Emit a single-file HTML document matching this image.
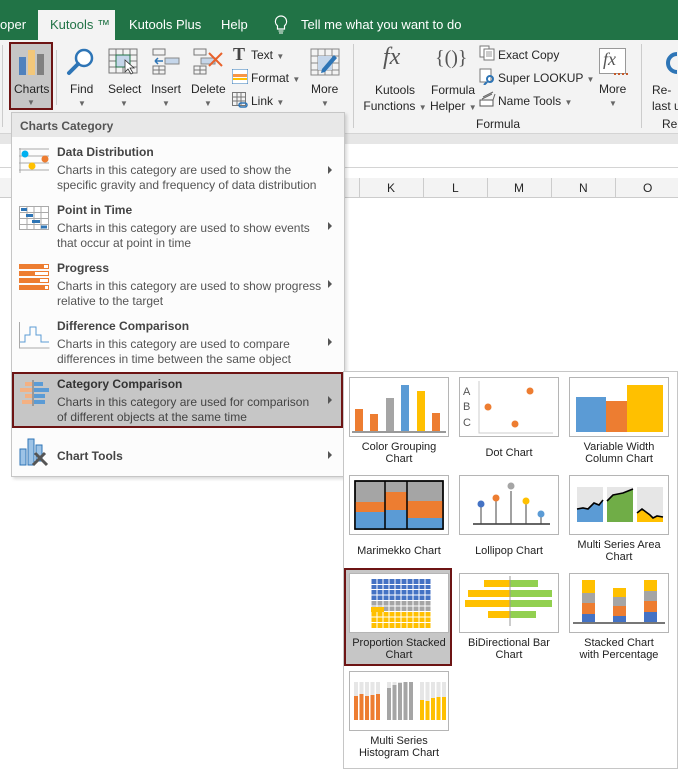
<!DOCTYPE html>
<html><head><meta charset="utf-8"><style>
*{margin:0;padding:0;box-sizing:border-box}
body{width:678px;height:769px;overflow:hidden;background:#fff;font-family:"Liberation Sans",sans-serif;position:relative;font-size:12px;color:#262626}
.a{position:absolute}
.t{position:absolute;white-space:nowrap}
.c{text-align:center}
.tab{color:#fff;font-size:13px;top:17px}
.rl{font-size:12px;color:#262626}
.dd{font-size:8px;color:#666}
.mt{font-weight:bold;color:#444;font-size:12px}
.md{color:#555;font-size:12px;line-height:15px}
.arr{position:absolute;right:10px;width:0;height:0;border-left:4px solid #555;border-top:4px solid transparent;border-bottom:4px solid transparent}
.tile{position:absolute;width:100px;height:60px;border:1px solid #b5b5b5;background:#fff}
.lab{position:absolute;width:110px;text-align:center;font-size:11px;line-height:12px;color:#222}
</style></head><body>
<!-- green bar -->
<div class="a" style="left:0;top:0;width:678px;height:40px;background:#217346"></div>
<div class="a" style="left:38px;top:10px;width:77px;height:31px;background:#f3f3f3"></div>
<div class="t tab" style="left:0">oper</div>
<div class="t tab" style="left:50px;color:#217346">Kutools ™</div>
<div class="t tab" style="left:129px">Kutools Plus</div>
<div class="t tab" style="left:221px">Help</div>
<svg class="a" style="left:274px;top:15px" width="14" height="20"><path d="M7 1a5.5 5.5 0 0 0-3.5 9.8V14h7v-3.2A5.5 5.5 0 0 0 7 1z" fill="none" stroke="#fff" stroke-width="1.2"/><path d="M4.5 16h5M5 18h4" stroke="#fff"/></svg>
<div class="t tab" style="left:301px">Tell me what you want to do</div>
<!-- ribbon -->
<div class="a" style="left:0;top:40px;width:678px;height:93px;background:#f3f3f3"></div>
<div class="a" style="left:2px;top:45px;width:1px;height:82px;background:#ccc"></div>
<div class="a" style="left:56px;top:50px;width:1px;height:55px;background:#ccc"></div>
<div class="a" style="left:353px;top:44px;width:1px;height:84px;background:#ccc"></div>
<div class="a" style="left:641px;top:44px;width:1px;height:84px;background:#ccc"></div>
<!-- Charts btn -->
<div class="a" style="left:9px;top:42px;width:44px;height:68px;background:#c6c6c6;border:2px solid #6d1414"></div>
<svg class="a" style="left:18px;top:48px" width="28" height="28"><rect x="1" y="9" width="7" height="18" fill="#4f81bd"/><rect x="10" y="2" width="7" height="25" fill="#f2c77a"/><rect x="19" y="6" width="7" height="21" fill="#808080"/></svg>
<div class="t rl" style="left:14px;top:82px">Charts</div>
<div class="t dd" style="left:27px;top:98px">▼</div>
<!-- Find -->
<svg class="a" style="left:66px;top:47px" width="30" height="30"><circle cx="18" cy="11" r="8" fill="#fff" stroke="#2e75b6" stroke-width="2.5"/><path d="M12 17L3 26" stroke="#2e75b6" stroke-width="4" stroke-linecap="round"/></svg>
<div class="t rl" style="left:70px;top:82px">Find</div><div class="t dd" style="left:78px;top:99px">▼</div>
<svg class="a" style="left:108px;top:48px" width="32" height="28"><g stroke="#777" fill="none"><rect x="1" y="1" width="28" height="24"/><path d="M1 7h28M1 13h28M1 19h28M8 1v24M15 1v24M22 1v24"/></g><rect x="8" y="7" width="14" height="12" fill="#c5d6ea" stroke="#217346"/><path d="M17 12l0 12 3-3 3 5 2-1-3-5 4 0z" fill="#fff" stroke="#333" stroke-width=".8"/></svg>
<div class="t rl" style="left:108px;top:82px">Select</div><div class="t dd" style="left:120px;top:99px">▼</div>
<svg class="a" style="left:152px;top:48px" width="30" height="28"><g stroke="#777" fill="none"><rect x="1" y="1" width="12" height="6"/><rect x="1" y="18" width="12" height="8"/><path d="M7 18v8M1 22h12M1 1h6"/><rect x="13" y="10" width="14" height="6" fill="#c5d6ea" stroke="#888"/></g><path d="M3 13h8M3 13l3-3M3 13l3 3" stroke="#2e75b6" stroke-width="1.5" fill="none"/></svg>
<div class="t rl" style="left:151px;top:82px">Insert</div><div class="t dd" style="left:162px;top:99px">▼</div>
<svg class="a" style="left:193px;top:48px" width="32" height="28"><g stroke="#777" fill="none"><rect x="1" y="1" width="12" height="6"/><rect x="1" y="18" width="12" height="8"/><path d="M7 18v8M1 22h12"/><rect x="8" y="10" width="14" height="6" fill="#c5d6ea" stroke="#888"/></g><path d="M16 5l13 13M29 5L16 18" stroke="#e8622c" stroke-width="2"/></svg>
<div class="t rl" style="left:191px;top:82px">Delete</div><div class="t dd" style="left:204px;top:99px">▼</div>
<div class="t" style="left:233px;top:44px;font-family:'Liberation Serif',serif;font-size:18px;font-weight:bold;color:#444">T</div>
<div class="t rl" style="left:251px;top:48px">Text <span class="dd">▼</span></div>
<svg class="a" style="left:232px;top:69px" width="16" height="15"><rect x="0" y="0" width="16" height="15" fill="#fff" stroke="#2e75b6"/><rect x="1" y="5" width="14" height="3" fill="#f79646"/><rect x="1" y="9" width="14" height="2" fill="#ffc000"/></svg>
<div class="t rl" style="left:251px;top:71px">Format <span class="dd">▼</span></div>
<svg class="a" style="left:232px;top:92px" width="16" height="16"><g stroke="#777" fill="none"><rect x=".5" y=".5" width="13" height="13"/><path d="M5 .5v13M9 .5v13M.5 5h13M.5 9h13"/></g><rect x="7" y="11" width="8" height="4" rx="2" fill="none" stroke="#2e75b6" stroke-width="1.5"/></svg>
<div class="t rl" style="left:251px;top:94px">Link <span class="dd">▼</span></div>
<svg class="a" style="left:310px;top:48px" width="30" height="28"><g stroke="#888" fill="none"><rect x="1" y="1" width="28" height="26"/><path d="M1 8h28M1 15h28M1 22h28M8 1v26M15 1v26M22 1v26"/></g><rect x="8" y="8" width="14" height="14" fill="#c5d6ea"/><path d="M12 21l12-14 3 3-12 14-4 1z" fill="#2e75b6"/></svg>
<div class="t rl" style="left:311px;top:82px">More</div><div class="t dd" style="left:321px;top:99px">▼</div>
<!-- formula group -->
<div class="t" style="left:383px;top:44px;font-family:'Liberation Serif',serif;font-style:italic;font-size:24px;color:#555">fx</div>
<div class="t rl c" style="left:362px;top:82px;width:66px;line-height:16px">Kutools<br>Functions <span class="dd">▼</span></div>
<div class="t" style="left:435px;top:47px;font-family:'Liberation Serif',serif;font-size:20px;color:#555">{()}</div>
<div class="t rl" style="left:430px;top:82px;line-height:16px;text-align:center;width:46px">Formula<br>Helper <span class="dd">▼</span></div>
<svg class="a" style="left:479px;top:45px" width="16" height="16"><rect x="1" y="1" width="9" height="11" fill="#fff" stroke="#777"/><rect x="5" y="4" width="10" height="11" fill="#fff" stroke="#777"/><path d="M7 7h6M7 9h6M7 11h6" stroke="#999"/></svg>
<div class="t rl" style="left:498px;top:48px">Exact Copy</div>
<svg class="a" style="left:479px;top:68px" width="17" height="17"><rect x="1" y="1" width="11" height="13" fill="#fff" stroke="#777"/><circle cx="11" cy="11" r="3" fill="none" stroke="#2e75b6" stroke-width="2"/><path d="M8 14l-3 3" stroke="#2e75b6" stroke-width="2"/></svg>
<div class="t rl" style="left:498px;top:71px">Super LOOKUP <span class="dd">▼</span></div>
<svg class="a" style="left:479px;top:91px" width="17" height="16"><rect x="1" y="9" width="13" height="6" fill="#fff" stroke="#555"/><path d="M3 8l10-5M4 6l10-5M14 9l2-6" stroke="#666" fill="none"/></svg>
<div class="t rl" style="left:498px;top:94px">Name Tools <span class="dd">▼</span></div>
<div class="a" style="left:599px;top:48px;width:27px;height:26px;border:1px solid #999;background:#fff"></div>
<div class="t" style="left:603px;top:49px;font-family:'Liberation Serif',serif;font-style:italic;font-size:18px;color:#555">fx</div>
<div class="a" style="left:614px;top:73px;width:14px;height:2px;border-top:2px dotted #c55a2a"></div>
<div class="t rl" style="left:599px;top:82px">More</div><div class="t dd" style="left:609px;top:99px">▼</div>
<div class="t rl" style="left:476px;top:117px">Formula</div>
<svg class="a" style="left:664px;top:50px" width="20" height="26"><path d="M13 4a9 9 0 1 0 0 18" stroke="#2e75b6" stroke-width="4" fill="none"/></svg>
<div class="t rl" style="left:652px;top:82px;line-height:16px">Re-<br>last u</div>
<div class="t rl" style="left:662px;top:117px">Rer</div>
<!-- sheet -->
<div class="a" style="left:0;top:133px;width:678px;height:11px;background:#e6e6e6;border-top:1px solid #d4d4d4"></div>
<div class="a" style="left:0;top:144px;width:678px;height:24px;background:#fff;border-bottom:1px solid #d4d4d4"></div>
<div class="a" style="left:0;top:178px;width:678px;height:20px;background:#f3f3f3;border-bottom:1px solid #ccc"></div>
<div class="a" style="left:359px;top:178px;width:1px;height:20px;background:#ccc"></div>
<div class="a" style="left:423px;top:178px;width:1px;height:20px;background:#ccc"></div>
<div class="a" style="left:487px;top:178px;width:1px;height:20px;background:#ccc"></div>
<div class="a" style="left:551px;top:178px;width:1px;height:20px;background:#ccc"></div>
<div class="a" style="left:615px;top:178px;width:1px;height:20px;background:#ccc"></div>
<div class="t" style="left:387px;top:181px;font-size:12px">K</div>
<div class="t" style="left:452px;top:181px;font-size:12px">L</div>
<div class="t" style="left:514px;top:181px;font-size:12px">M</div>
<div class="t" style="left:579px;top:181px;font-size:12px">N</div>
<div class="t" style="left:643px;top:181px;font-size:12px">O</div>
<!-- menu -->
<div class="a" style="left:11px;top:112px;width:334px;height:365px;background:#fcfcfc;border:1px solid #c6c6c6;box-shadow:2px 2px 3px rgba(0,0,0,.15)"></div>
<div class="a" style="left:12px;top:113px;width:332px;height:24px;background:#e8e8e8"></div>
<div class="t" style="left:20px;top:119px;font-weight:bold;color:#555">Charts Category</div>
<svg class="a" style="left:19px;top:148px" width="31" height="26"><path d="M0 1h30M0 8h30M0 15h30M0 22h30M1 0v25" stroke="#aaa" fill="none"/><circle cx="6" cy="6" r="3.5" fill="#00b0f0"/><circle cx="26" cy="11" r="3.5" fill="#ed7d31"/><circle cx="13" cy="18" r="3.5" fill="#ffc000"/></svg>
<div class="t mt" style="left:57px;top:145px">Data Distribution</div>
<div class="t md" style="left:57px;top:163px">Charts in this category are used to show the<br>specific gravity and frequency of data distribution</div>
<div class="arr" style="left:328px;top:166px"></div>
<svg class="a" style="left:19px;top:206px" width="31" height="25"><g stroke="#aaa" fill="#fff"><rect x=".5" y=".5" width="29" height="23"/><path d="M.5 6.5h29M.5 12.5h29M.5 18.5h29M8 .5v23M15 .5v23M22 .5v23"/></g><path d="M2 3.5h6M7 9.5h7M13 15.5h8M22 21h6" stroke="#2e75b6" stroke-width="3"/></svg>
<div class="t mt" style="left:57px;top:203px">Point in Time</div>
<div class="t md" style="left:57px;top:221px">Charts in this category are used to show events<br>that occur at point in time</div>
<div class="arr" style="left:328px;top:222px"></div>
<svg class="a" style="left:19px;top:264px" width="31" height="26"><g fill="#ed7d31"><rect x="0" y="0" width="30" height="5"/><rect x="0" y="7" width="30" height="5"/><rect x="0" y="14" width="30" height="5"/><rect x="0" y="21" width="30" height="5"/></g><g fill="#fff"><rect x="25" y="1" width="4" height="3"/><rect x="16" y="8" width="13" height="3"/><rect x="21" y="15" width="8" height="3"/><rect x="26" y="22" width="3" height="3"/></g></svg>
<div class="t mt" style="left:57px;top:261px">Progress</div>
<div class="t md" style="left:57px;top:279px">Charts in this category are used to show progress<br>relative to the target</div>
<div class="arr" style="left:328px;top:280px"></div>
<svg class="a" style="left:19px;top:322px" width="31" height="27"><path d="M.5 0v26h30" stroke="#aaa" fill="none"/><path d="M1 20h5v-7h5v-8h6v8h5v7h8" stroke="#5b9bd5" fill="none"/></svg>
<div class="t mt" style="left:57px;top:319px">Difference Comparison</div>
<div class="t md" style="left:57px;top:337px">Charts in this category are used to compare<br>differences in time between the same object</div>
<div class="arr" style="left:328px;top:338px"></div>
<div class="a" style="left:12px;top:372px;width:331px;height:56px;background:#c6c6c6;border:2px solid #6d1414"></div>
<svg class="a" style="left:19px;top:380px" width="31" height="26"><rect x="6" y="2" width="8" height="4" fill="#f4b183"/><rect x="14" y="2" width="10" height="4" fill="#5b9bd5"/><rect x="1" y="8" width="13" height="4" fill="#f4b183"/><rect x="14" y="8" width="16" height="4" fill="#5b9bd5"/><rect x="6" y="14" width="8" height="4" fill="#f4b183"/><rect x="14" y="14" width="12" height="4" fill="#5b9bd5"/><rect x="3" y="20" width="11" height="4" fill="#f4b183"/><rect x="14" y="20" width="12" height="4" fill="#5b9bd5"/><rect x="13" y="0" width="2" height="26" fill="#999"/></svg>
<div class="t mt" style="left:57px;top:377px;color:#333">Category Comparison</div>
<div class="t md" style="left:57px;top:395px;color:#444">Charts in this category are used for comparison<br>of different objects at the same time</div>
<div class="arr" style="left:328px;top:396px"></div>
<svg class="a" style="left:19px;top:437px" width="31" height="30"><rect x="1" y="12" width="6" height="16" fill="#9dc3e6" stroke="#2e75b6"/><rect x="9" y="2" width="6" height="26" fill="#9dc3e6" stroke="#2e75b6"/><rect x="17" y="8" width="6" height="16" fill="#9dc3e6" stroke="#2e75b6"/><path d="M14 28l12-12M16 16l12 12" stroke="#555" stroke-width="3"/></svg>
<div class="t mt" style="left:57px;top:449px">Chart Tools</div>
<div class="arr" style="left:328px;top:451px"></div>
<!-- submenu -->
<div class="a" style="left:343px;top:371px;width:335px;height:398px;background:#fff;border:1px solid #c6c6c6"></div>
<div class="a" style="left:344px;top:568px;width:108px;height:98px;background:#c6c6c6;border:2px solid #6d1414"></div>
<!-- row1 -->
<div class="tile" style="left:349px;top:377px"><svg width="98" height="58"><rect x="5" y="31" width="8" height="22" fill="#ed7d31"/><rect x="20" y="36" width="8" height="17" fill="#ed7d31"/><rect x="36" y="20" width="8" height="33" fill="#a5a5a5"/><rect x="51" y="7" width="8" height="46" fill="#5b9bd5"/><rect x="67" y="13" width="8" height="40" fill="#ffc000"/><rect x="82" y="35" width="8" height="18" fill="#ed7d31"/><rect x="2" y="53" width="94" height="2" fill="#999"/></svg></div>
<div class="lab" style="left:344px;top:441px">Color Grouping<br>Chart</div>
<div class="tile" style="left:459px;top:377px"><svg width="98" height="58"><text x="3" y="17" font-size="11" fill="#555" font-family="Liberation Sans">A</text><text x="3" y="32" font-size="11" fill="#555" font-family="Liberation Sans">B</text><text x="3" y="48" font-size="11" fill="#555" font-family="Liberation Sans">C</text><path d="M19 3v52h74" stroke="#ccc" fill="none"/><circle cx="70" cy="13" r="3.5" fill="#ed7d31"/><circle cx="28" cy="29" r="3.5" fill="#ed7d31"/><circle cx="55" cy="46" r="3.5" fill="#ed7d31"/></svg></div>
<div class="lab" style="left:454px;top:447px">Dot Chart</div>
<div class="tile" style="left:569px;top:377px"><svg width="98" height="58"><rect x="6" y="19" width="30" height="35" fill="#5b9bd5"/><rect x="36" y="23" width="21" height="31" fill="#ed7d31"/><rect x="57" y="7" width="36" height="47" fill="#ffc000"/></svg></div>
<div class="lab" style="left:564px;top:441px">Variable Width<br>Column Chart</div>
<!-- row2 -->
<div class="tile" style="left:349px;top:475px"><svg width="98" height="58"><rect x="5" y="5" width="88" height="48" fill="#a5a5a5" stroke="#000" stroke-width="1.5"/><rect x="5" y="26" width="30" height="10" fill="#ed7d31"/><rect x="5" y="36" width="30" height="17" fill="#5b9bd5"/><rect x="35" y="16" width="22" height="18" fill="#ed7d31"/><rect x="35" y="34" width="22" height="19" fill="#5b9bd5"/><rect x="57" y="25" width="36" height="17" fill="#ed7d31"/><rect x="57" y="42" width="36" height="11" fill="#5b9bd5"/><path d="M35 5v48M57 5v48" stroke="#000" stroke-width="1.5"/><rect x="5" y="5" width="88" height="48" fill="none" stroke="#000" stroke-width="1.5"/></svg></div>
<div class="lab" style="left:344px;top:545px">Marimekko Chart</div>
<div class="tile" style="left:459px;top:475px"><svg width="98" height="58"><path d="M13 48h77" stroke="#333" stroke-width="1.5"/><g stroke="#444"><path d="M21 28v20M36 22v26M51 15v33M66 28v20M81 38v10"/></g><circle cx="21" cy="28" r="3.5" fill="#4472c4"/><circle cx="36" cy="22" r="3.5" fill="#ed7d31"/><circle cx="51" cy="10" r="3.5" fill="#a5a5a5"/><circle cx="66" cy="25" r="3.5" fill="#ffc000"/><circle cx="81" cy="38" r="3.5" fill="#5b9bd5"/></svg></div>
<div class="lab" style="left:454px;top:545px">Lollipop Chart</div>
<div class="tile" style="left:569px;top:475px"><svg width="98" height="58"><rect x="7" y="11" width="26" height="35" fill="#e6e6e6"/><rect x="37" y="11" width="26" height="35" fill="#e6e6e6"/><rect x="67" y="11" width="26" height="35" fill="#e6e6e6"/><path d="M7 33l6-1 5 1 6-6 5 2 4-5V46H7z" fill="#5b9bd5"/><path d="M37 25l6-6 5-1 5-1 5-2 5-2V46H37z" fill="#70ad47"/><path d="M67 37l5-4 4 3 4 3 3 3 4-2 6 1V46H67z" fill="#ffc000"/><path d="M7 33l6-1 5 1 6-6 5 2 4-5M37 25l6-6 5-1 5-1 5-2 5-2M67 37l5-4 4 3 4 3 3 3 4-2 6 1" stroke="#000" stroke-width="1.6" fill="none"/></svg></div>
<div class="lab" style="left:564px;top:539px">Multi Series Area<br>Chart</div>
<!-- row3 -->
<div class="tile" style="left:349px;top:573px"><svg width="98" height="58"><g id="r"></g>
<defs><pattern id="p" width="6" height="5.4" patternUnits="userSpaceOnUse"><rect width="5" height="4.4"/></pattern></defs>
<rect x="21" y="5" width="60" height="22" fill="#4472c4" style="mask:none"/>
<rect x="21" y="27" width="60" height="11" fill="#a5a5a5"/>
<rect x="21" y="38" width="60" height="16" fill="#ffc000"/>
<path d="M21 0v60M27 0v60M33 0v60M39 0v60M45 0v60M51 0v60M57 0v60M63 0v60M69 0v60M75 0v60M81 0v60" stroke="#fff" stroke-width="1"/>
<path d="M0 10.5h98M0 15.5h98M0 21h98M0 26.5h98M0 32h98M0 37.5h98M0 43h98M0 48.5h98" stroke="#fff" stroke-width="1"/>
<rect x="21" y="33" width="13" height="5" fill="#ffc000"/></svg></div>
<div class="lab" style="left:344px;top:637px">Proportion Stacked<br>Chart</div>
<div class="tile" style="left:459px;top:573px"><svg width="98" height="58"><rect x="24" y="6" width="26" height="7" fill="#ffc000"/><rect x="50" y="6" width="28" height="7" fill="#92d050"/><rect x="8" y="16" width="42" height="7" fill="#ffc000"/><rect x="50" y="16" width="42" height="7" fill="#92d050"/><rect x="5" y="26" width="45" height="7" fill="#ffc000"/><rect x="50" y="26" width="42" height="7" fill="#92d050"/><rect x="28" y="37" width="22" height="7" fill="#ffc000"/><rect x="50" y="37" width="26" height="7" fill="#92d050"/><path d="M50 2v50" stroke="#999"/></svg></div>
<div class="lab" style="left:454px;top:637px">BiDirectional Bar<br>Chart</div>
<div class="tile" style="left:569px;top:573px"><svg width="98" height="58"><g><rect x="12" y="6" width="13" height="13" fill="#ffc000"/><rect x="12" y="19" width="13" height="10" fill="#a5a5a5"/><rect x="12" y="29" width="13" height="11" fill="#ed7d31"/><rect x="12" y="40" width="13" height="8" fill="#4472c4"/><rect x="43" y="14" width="13" height="9" fill="#ffc000"/><rect x="43" y="23" width="13" height="9" fill="#a5a5a5"/><rect x="43" y="32" width="13" height="10" fill="#ed7d31"/><rect x="43" y="42" width="13" height="6" fill="#4472c4"/><rect x="74" y="6" width="13" height="11" fill="#ffc000"/><rect x="74" y="17" width="13" height="10" fill="#a5a5a5"/><rect x="74" y="27" width="13" height="11" fill="#ed7d31"/><rect x="74" y="38" width="13" height="10" fill="#4472c4"/><rect x="3" y="48" width="92" height="2" fill="#777"/></g></svg></div>
<div class="lab" style="left:564px;top:637px">Stacked Chart<br>with Percentage</div>
<!-- row4 -->
<div class="tile" style="left:349px;top:671px"><svg width="98" height="58"><g fill="#e6e6e6"><rect x="4" y="10" width="26" height="38"/><rect x="37" y="10" width="26" height="38"/><rect x="70" y="10" width="26" height="38"/></g><g fill="#ed7d31"><rect x="4" y="24" width="4" height="24"/><rect x="9.5" y="22" width="4" height="26"/><rect x="15" y="24" width="4" height="24"/><rect x="20.5" y="23" width="4" height="25"/><rect x="26" y="22" width="4" height="26"/></g><g fill="#a5a5a5"><rect x="37" y="16" width="4" height="32"/><rect x="42.5" y="13" width="4" height="35"/><rect x="48" y="11" width="4" height="37"/><rect x="53.5" y="10" width="4" height="38"/><rect x="59" y="10" width="4" height="38"/></g><g fill="#ffc000"><rect x="70" y="28" width="4" height="20"/><rect x="75.5" y="29" width="4" height="19"/><rect x="81" y="26" width="4" height="22"/><rect x="86.5" y="25" width="4" height="23"/><rect x="92" y="25" width="4" height="23"/></g><g fill="#fff"><rect x="8" y="10" width="1.5" height="38"/><rect x="13.5" y="10" width="1.5" height="38"/><rect x="19" y="10" width="1.5" height="38"/><rect x="24.5" y="10" width="1.5" height="38"/><rect x="41" y="10" width="1.5" height="38"/><rect x="46.5" y="10" width="1.5" height="38"/><rect x="52" y="10" width="1.5" height="38"/><rect x="57.5" y="10" width="1.5" height="38"/><rect x="74" y="10" width="1.5" height="38"/><rect x="79.5" y="10" width="1.5" height="38"/><rect x="85" y="10" width="1.5" height="38"/><rect x="90.5" y="10" width="1.5" height="38"/></g></svg></div>
<div class="lab" style="left:344px;top:735px">Multi Series<br>Histogram Chart</div>
</body></html>
